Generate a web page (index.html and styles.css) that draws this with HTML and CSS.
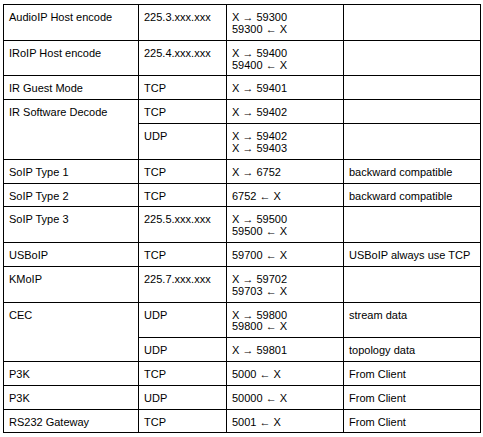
FILE: index.html
```html
<!DOCTYPE html>
<html>
<head>
<meta charset="utf-8">
<link rel="stylesheet" href="styles.css">
</head>
<body>
<table class="ports">
  <colgroup>
    <col class="c1"><col class="c2"><col class="c3"><col class="c4">
  </colgroup>
  <tr><td>AudioIP Host encode</td><td>225.3.xxx.xxx</td><td>X → 59300<br>59300 ← X</td><td></td></tr>
  <tr><td>IRoIP Host encode</td><td>225.4.xxx.xxx</td><td>X → 59400<br>59400 ← X</td><td></td></tr>
  <tr><td>IR Guest Mode</td><td>TCP</td><td>X → 59401</td><td></td></tr>
  <tr><td rowspan="2">IR Software Decode</td><td>TCP</td><td>X → 59402</td><td></td></tr>
  <tr><td>UDP</td><td>X → 59402<br>X → 59403</td><td></td></tr>
  <tr><td>SoIP Type 1</td><td>TCP</td><td>X → 6752</td><td>backward compatible</td></tr>
  <tr><td>SoIP Type 2</td><td>TCP</td><td>6752 ← X</td><td>backward compatible</td></tr>
  <tr><td>SoIP Type 3</td><td>225.5.xxx.xxx</td><td>X → 59500<br>59500 ← X</td><td></td></tr>
  <tr><td>USBoIP</td><td>TCP</td><td>59700 ← X</td><td>USBoIP always use TCP</td></tr>
  <tr><td>KMoIP</td><td>225.7.xxx.xxx</td><td>X → 59702<br>59703 ← X</td><td></td></tr>
  <tr><td rowspan="2">CEC</td><td>UDP</td><td>X → 59800<br>59800 ← X</td><td>stream data</td></tr>
  <tr><td>UDP</td><td>X → 59801</td><td>topology data</td></tr>
  <tr><td>P3K</td><td>TCP</td><td>5000 ← X</td><td>From Client</td></tr>
  <tr><td>P3K</td><td>UDP</td><td>50000 ← X</td><td>From Client</td></tr>
  <tr><td>RS232 Gateway</td><td>TCP</td><td>5001 ← X</td><td>From Client</td></tr>
</table>
</body>
</html>
```

FILE: styles.css
```css
html, body {
  margin: 0;
  padding: 0;
  background: #ffffff;
}
body {
  padding: 4px 0 0 3px;
  font-family: "Liberation Sans", Arial, sans-serif;
  font-size: 11px;
  color: #000000;
}
.ports {
  border-collapse: collapse;
  table-layout: fixed;
  width: 477px;
}
.c1 { width: 135px; }
.c2 { width: 88px; }
.c3 { width: 117px; }
.c4 { width: 137px; }
.ports td {
  border: 1px solid #000000;
  padding: 7px 5px 3.9px 5px;
  line-height: 11.9px;
  vertical-align: top;
  white-space: nowrap;
}
```
